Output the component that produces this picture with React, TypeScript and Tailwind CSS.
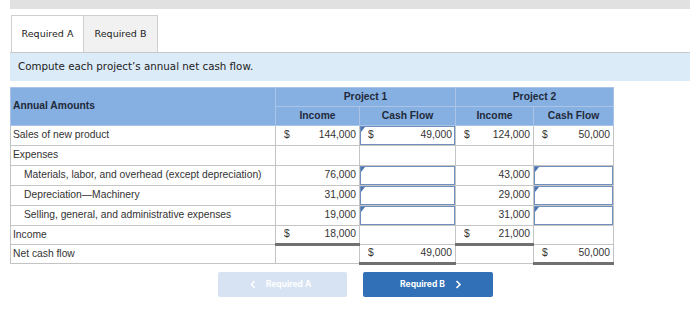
import React from 'react';

/* ----------------------- data ----------------------- */

interface Row {
  label: string;
  indent?: boolean;
  p1Inc?: string;
  p1IncDollar?: boolean;
  p1Cf?: string;
  p1CfDollar?: boolean;
  p1CfInput?: boolean;
  p2Inc?: string;
  p2IncDollar?: boolean;
  p2Cf?: string;
  p2CfDollar?: boolean;
  p2CfInput?: boolean;
  incTotal?: boolean;
  cfTotal?: boolean;
}

const rows: Row[] = [
  {label: 'Sales of new product', p1Inc: '144,000', p1IncDollar: true, p1Cf: '49,000', p1CfDollar: true, p1CfInput: true, p2Inc: '124,000', p2IncDollar: true, p2Cf: '50,000', p2CfDollar: true},
  {label: 'Expenses'},
  {label: 'Materials, labor, and overhead (except depreciation)', indent: true, p1Inc: '76,000', p1CfInput: true, p2Inc: '43,000', p2CfInput: true},
  {label: 'Depreciation\u2014Machinery', indent: true, p1Inc: '31,000', p1CfInput: true, p2Inc: '29,000', p2CfInput: true},
  {label: 'Selling, general, and administrative expenses', indent: true, p1Inc: '19,000', p1CfInput: true, p2Inc: '31,000', p2CfInput: true},
  {label: 'Income', p1Inc: '18,000', p1IncDollar: true, p2Inc: '21,000', p2IncDollar: true, incTotal: true},
  {label: 'Net cash flow', p1Cf: '49,000', p1CfDollar: true, p2Cf: '50,000', p2CfDollar: true, cfTotal: true},
];

const hdr = 'border border-[#a9c4e6] bg-[#87b0e2] font-bold text-[#1f2a3a] text-center p-0 h-[19px] leading-none';
const cell = 'border border-[#c4c4c4] p-0 align-middle leading-none';
const total = 'border-b-[3px] border-b-[#707070]';

/* ----------------------- cells ----------------------- */

function Amount({value, dollar, input, short}: {value?: string; dollar?: boolean; input?: boolean; short?: boolean}) {
  if (input) {
    return (
      <div className="relative h-[19px] border border-[#6f8fbf] flex items-center justify-between px-[7px] pr-[2px]">
        <span className="absolute left-0 top-0 w-0 h-0 border-t-[5px] border-r-[4px] border-t-[#4a74b0] border-r-transparent"/>
        <span>{dollar ? '$' : ''}</span>
        <span>{value ?? ''}</span>
      </div>
    );
  }
  return (
    <div className={`${short ? 'h-[17px]' : 'h-[19px]'} flex items-center justify-between px-[8px] pr-[3px]`}>
      <span>{dollar ? '$' : ''}</span>
      <span>{value ?? ''}</span>
    </div>
  );
}

/* ----------------------- app ----------------------- */

export default function App() {
  return (
    <div className="w-[700px] h-[323px] bg-white overflow-hidden font-['DejaVu_Sans',sans-serif]">
      <div className="mx-[10px] h-[9px] bg-[#e1e1e1]"/>

      {/* tabs */}
      <div className="mt-[6px] ml-[11px] flex text-[9.5px] text-[#222]">
        <div className="w-[73px] h-[37px] border border-b-0 border-[#cfcfcf] bg-white flex items-center justify-center">
          Required A
        </div>
        <div className="w-[74px] h-[37px] border border-l-0 border-b-0 border-[#cfcfcf] bg-[#f1f1f1] flex items-center justify-center">
          Required B
        </div>
      </div>

      <div className="mx-[10px] h-[29px] border-t border-[#c8c8c8] bg-[#dcebf8] flex items-center pl-[8px] text-[10.3px] text-[#222]">
        Compute each project&rsquo;s annual net cash flow.
      </div>

      {/* table */}
      <table className="mt-[6px] ml-[10px] w-[603px] table-fixed border-collapse font-['Liberation_Sans',Arial,sans-serif] text-[10.3px] text-[#333]">
        <colgroup>
          <col className="w-[265px]"/>
          <col className="w-[84px]"/>
          <col className="w-[96px]"/>
          <col className="w-[78px]"/>
          <col className="w-[80px]"/>
        </colgroup>
        <thead>
          <tr>
            <th rowSpan={2} className={`${hdr} text-left pl-[2px]`}>Annual Amounts</th>
            <th colSpan={2} className={hdr}>Project 1</th>
            <th colSpan={2} className={hdr}>Project 2</th>
          </tr>
          <tr>
            <th className={hdr}>Income</th>
            <th className={hdr}>Cash Flow</th>
            <th className={hdr}>Income</th>
            <th className={hdr}>Cash Flow</th>
          </tr>
        </thead>
        <tbody>
          {rows.map((r, i) => {
            const short = r.incTotal || r.cfTotal;
            return (
              <tr key={i}>
                <td className={`${cell} ${r.indent ? 'pl-[13px]' : 'pl-[2px]'}`}>
                  <div className={`${short ? 'h-[17px]' : 'h-[19px]'} flex items-center`}>{r.label}</div>
                </td>
                <td className={`${cell} ${r.incTotal ? total : ''}`}>
                  <Amount value={r.p1Inc} dollar={r.p1IncDollar} short={short}/>
                </td>
                <td className={`${cell} ${r.cfTotal ? total : ''}`}>
                  <Amount value={r.p1Cf} dollar={r.p1CfDollar} input={r.p1CfInput} short={short}/>
                </td>
                <td className={`${cell} ${r.incTotal ? total : ''}`}>
                  <Amount value={r.p2Inc} dollar={r.p2IncDollar} short={short}/>
                </td>
                <td className={`${cell} ${r.cfTotal ? total : ''}`}>
                  <Amount value={r.p2Cf} dollar={r.p2CfDollar} input={r.p2CfInput} short={short}/>
                </td>
              </tr>
            );
          })}
        </tbody>
      </table>

      {/* nav buttons */}
      <div className="mt-[7px] ml-[218px] flex gap-[16px] font-['Inter',sans-serif] text-[8.5px] font-bold text-white">
        <div className="w-[129px] h-[25px] rounded-[2px] bg-[#d7e3f2] flex items-center justify-center gap-[10px] pr-[4px]">
          <svg width="6" height="9" viewBox="0 0 6 9" fill="none">
            <path d="M4.5 1L1.5 4.5 4.5 8" stroke="white" strokeWidth="1.5"/>
          </svg>
          <span>Required A</span>
        </div>
        <div className="w-[130px] h-[25px] rounded-[2px] bg-[#316fb6] flex items-center justify-center gap-[10px] pl-[6px]">
          <span>Required B</span>
          <svg width="7" height="9" viewBox="0 0 7 9" fill="none">
            <path d="M1.5 1l3.5 3.5L1.5 8" stroke="white" strokeWidth="1.6"/>
          </svg>
        </div>
      </div>
    </div>
  );
}
